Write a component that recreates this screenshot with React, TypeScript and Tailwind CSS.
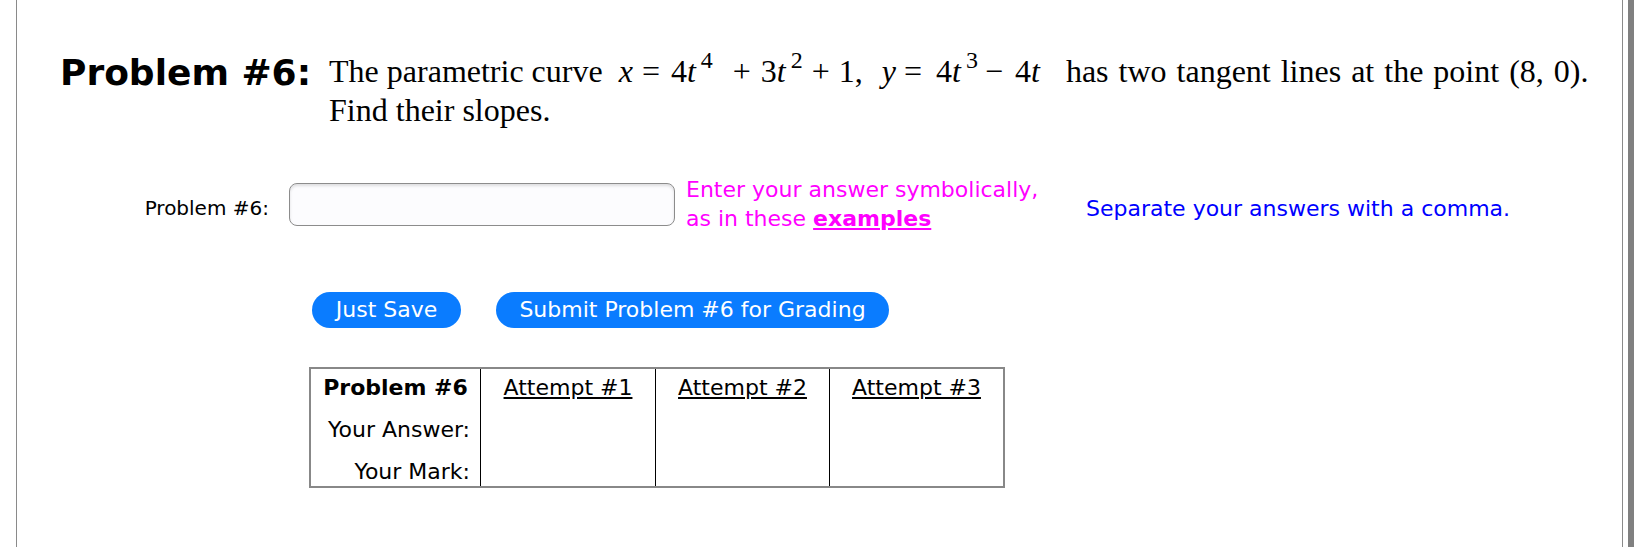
const sup = "relative -top-[14px] text-[24px]";

const attempts = ["Attempt #1", "Attempt #2", "Attempt #3"];

export default function App() {
  return (
    <div className="flex h-[547px] w-[1640px] bg-white font-['DejaVu_Sans',sans-serif] text-black">
      <div className="ml-[16px] w-[1607px] border-x border-[#8a8a8a]">
        {/* problem statement */}
        <div className="mt-[51px] flex items-start pl-[43px]">
          <span className="text-[36px] font-bold leading-[44px] whitespace-nowrap">Problem #6:</span>
          <div className="ml-[18px] mt-[2px] whitespace-nowrap font-['Liberation_Serif',serif] text-[32px] leading-[36px]">
            The parametric curve
            <span className="ml-[16px] italic">x</span>
            <span className="ml-[9px]">=</span>
            <span className="ml-[11px]">4</span>
            <span className="italic">t</span>
            <span className={`${sup} ml-[5px]`}>4</span>
            <span className="ml-[20px]">+</span>
            <span className="ml-[10px]">3</span>
            <span className="italic">t</span>
            <span className={`${sup} ml-[5px]`}>2</span>
            <span className="ml-[9px]">+</span>
            <span className="ml-[9px]">1,</span>
            <span className="ml-[19px] italic">y</span>
            <span className="ml-[8px]">=</span>
            <span className="ml-[14px]">4</span>
            <span className="italic">t</span>
            <span className={`${sup} ml-[5px]`}>3</span>
            <span className="ml-[7px]">−</span>
            <span className="ml-[12px]">4</span>
            <span className="italic">t</span>
            <span className="ml-[26px] [word-spacing:2px]">has two tangent lines at the point (8, 0).</span>
            <br />
            Find their slopes.
          </div>
        </div>

        {/* answer row */}
        <div className="mt-[47px] flex items-center">
          <label className="mt-[8px] w-[252px] text-right text-[20px]">Problem #6:</label>
          <input
            type="text"
            className="ml-[20px] h-[43px] w-[386px] rounded-[8px] border-[1.5px] border-[#8c8c8c] bg-[#fcfcfe] shadow-[inset_0_2px_3px_rgba(0,0,0,0.12)] outline-none"
          />
          <div className="ml-[11px] w-[400px] text-[22px] leading-[29px] text-[#ff00ff]">
            Enter your answer symbolically,
            <br />
            as in these <a className="font-bold underline">examples</a>
          </div>
          <div className="mt-[8px] whitespace-nowrap text-[22px] text-[#0000ff]">
            Separate your answers with a comma.
          </div>
        </div>

        {/* buttons */}
        <div className="mt-[59px] flex gap-[35px] pl-[295px]">
          <button className="h-[36px] w-[149px] rounded-full bg-[#0a7cff] text-[22px] leading-[36px] text-white">
            Just Save
          </button>
          <button className="h-[36px] w-[393px] rounded-full bg-[#0a7cff] text-[22px] leading-[36px] text-white">
            Submit Problem #6 for Grading
          </button>
        </div>

        {/* attempts table */}
        <div className="ml-[292px] mt-[39px] grid w-[696px] grid-cols-[169px_175px_174px_174px] grid-rows-[41px_42px_34px] border-2 border-[#888] text-[22px] leading-[36px]">
          <div className="pt-[1px] text-center font-bold">Problem #6</div>
          {attempts.map((a) => (
            <div key={a} className="border-l border-black pt-[1px] text-center underline">
              {a}
            </div>
          ))}
          <div className="pt-[2px] pr-[10px] text-right">Your Answer:</div>
          <div className="border-l border-black" />
          <div className="border-l border-black" />
          <div className="border-l border-black" />
          <div className="pt-[2px] pr-[10px] text-right">Your Mark:</div>
          <div className="border-l border-black" />
          <div className="border-l border-black" />
          <div className="border-l border-black" />
        </div>
      </div>
      <div className="ml-[5px] w-[6px] bg-[#808080]" />
    </div>
  );
}
